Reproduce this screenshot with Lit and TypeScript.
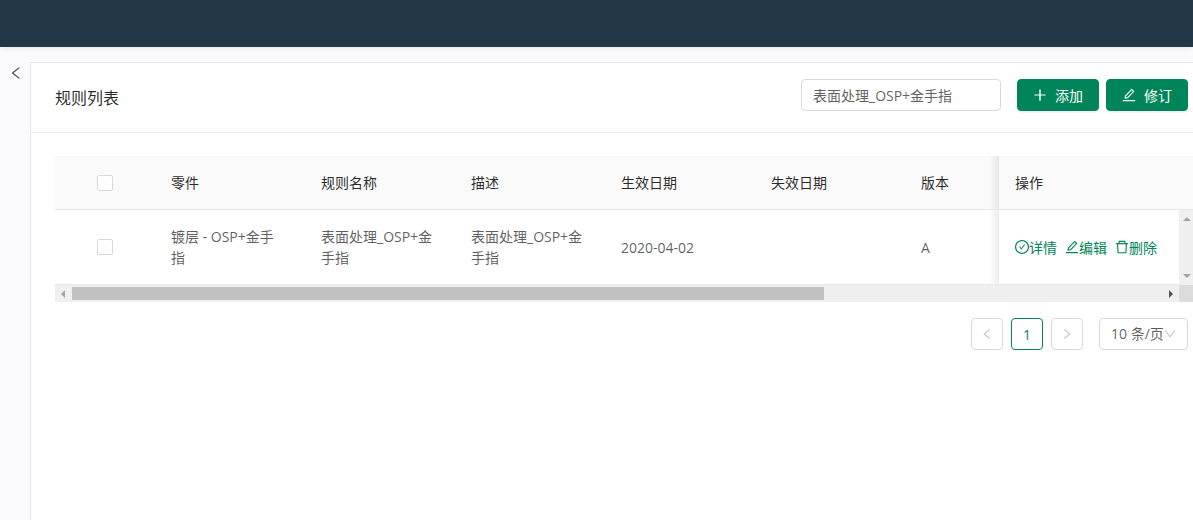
import { LitElement, html, css, svg } from "lit";
import { customElement, state } from "lit/decorators.js";

const ICONS: Record<string, string[]> = {
  plus: [
    "M474 152h76q8 0 8 8v704q0 8-8 8h-76q-8 0-8-8V160q0-8 8-8z",
    "M160 474h704q8 0 8 8v60q0 8-8 8H160q-8 0-8-8v-60q0-8 8-8z",
  ],
  edit: [
    "M257.7 752c2 0 4-.2 6-.5L431.9 722c2-.4 3.9-1.3 5.3-2.8l423.9-423.9a9.96 9.96 0 000-14.1L694.9 114.9c-1.9-1.9-4.4-2.9-7.1-2.9s-5.2 1-7.1 2.9L256.8 538.8c-1.5 1.5-2.4 3.3-2.8 5.3l-29.5 168.2a33.5 33.5 0 009.4 29.8c6.6 6.4 14.9 9.9 23.8 9.9zm67.4-174.4L687.8 215l73.3 73.3-362.7 362.6-88.9 15.7 15.6-89zM880 836H144c-17.7 0-32 14.3-32 32v36c0 4.4 3.6 8 8 8h784c4.4 0 8-3.6 8-8v-36c0-17.7-14.3-32-32-32z",
  ],
  check: [
    "M699 353h-46.9c-10.2 0-19.9 4.9-25.9 13.3L469 584.3l-71.2-98.8c-6-8.3-15.6-13.3-25.9-13.3H325c-6.5 0-10.3 7.4-6.5 12.7l124.6 172.8a31.8 31.8 0 0051.7 0l210.6-292c3.9-5.3.1-12.7-6.4-12.7z",
    "M512 64C264.6 64 64 264.6 64 512s200.6 448 448 448 448-200.6 448-448S759.4 64 512 64zm0 820c-205.4 0-372-166.6-372-372s166.6-372 372-372 372 166.6 372 372-166.6 372-372 372z",
  ],
  trash: [
    "M360 184h-8c4.4 0 8-3.6 8-8v8h304v-8c0 4.4 3.6 8 8 8h-8v72h72v-80c0-35.3-28.7-64-64-64H352c-35.3 0-64 28.7-64 64v80h72v-72zm504 72H160c-17.7 0-32 14.3-32 32v32c0 4.4 3.6 8 8 8h60.4l24.7 523c1.6 34.1 29.8 61 63.9 61h454c34.2 0 62.3-26.8 63.9-61l24.7-523H888c4.4 0 8-3.6 8-8v-32c0-17.7-14.3-32-32-32zM731.3 840H292.7l-24.2-512h487l-24.2 512z",
  ],
  left: [
    "M724 218.3V141c0-6.7-7.7-10.4-12.9-6.3L260.3 486.8a31.86 31.86 0 000 50.3l450.8 352.1c5.3 4.1 12.9.4 12.9-6.3v-77.3c0-4.9-2.3-9.6-6.1-12.6l-360-281 360-281.1c3.8-3 6.1-7.7 6.1-12.6z",
  ],
  right: [
    "M765.7 486.8L314.9 134.7A7.97 7.97 0 00302 141v77.3c0 4.9 2.3 9.6 6.1 12.6l360 281.1-360 281.1c-3.9 3-6.1 7.7-6.1 12.6V883c0 6.7 7.7 10.4 12.9 6.3l450.8-352.1a31.96 31.96 0 000-50.4z",
  ],
  down: [
    "M884 256h-75c-5.1 0-9.9 2.5-12.9 6.6L512 654.2 227.9 262.6c-3-4.1-7.8-6.6-12.9-6.6h-75c-6.5 0-10.3 7.4-6.5 12.7l352.6 486.1c12.8 17.6 39 17.6 51.7 0l352.6-486.1c3.9-5.3.1-12.7-6.4-12.7z",
  ],
};

const icon = (name: string, cls = "icon") => html`
  <svg class=${cls} viewBox="64 64 896 896" aria-hidden="true">
    ${ICONS[name].map((d) => svg`<path d=${d}></path>`)}
  </svg>`;

const arrow = (points: string, cls: string) => html`
  <svg class=${cls} viewBox="0 0 8 8" aria-hidden="true"><polygon points=${points}></polygon></svg>`;

interface Rule {
  part: string;
  name: string;
  desc: string;
  from: string;
  to: string;
  version: string;
}

@customElement("app-root")
export class AppRoot extends LitElement {
  @state() private keyword = "表面处理_OSP+金手指";

  private rules: Rule[] = [
    {
      part: "镀层 - OSP+金手指",
      name: "表面处理_OSP+金手指",
      desc: "表面处理_OSP+金手指",
      from: "2020-04-02",
      to: "",
      version: "A",
    },
  ];

  static styles = css`
    :host {
      display: flex;
      flex-direction: column;
      min-height: 100vh;
      background: #f9f9fe;
      color: rgba(0, 0, 0, 0.65);
      font: 14px/21px "Open Sans", "Noto Sans CJK SC", sans-serif;
    }
    * {
      box-sizing: border-box;
    }
    button,
    input,
    select {
      font: inherit;
      color: inherit;
      margin: 0;
    }
    button {
      cursor: pointer;
    }
    .icon {
      width: 14px;
      height: 14px;
      fill: currentColor;
      flex: none;
    }
    .topbar {
      height: 47px;
      background: #243746;
      box-shadow: 0 1px 6px rgba(0, 21, 41, 0.08);
    }
    .body {
      flex: 1;
      display: flex;
      padding-top: 15px;
    }
    .side {
      width: 30px;
      flex: none;
      padding-left: 2px;
      display: flex;
      justify-content: center;
      align-items: flex-start;
    }
    .collapse {
      display: flex;
      border: 0;
      background: none;
      padding: 4px 0;
    }
    .card {
      flex: 1;
      min-width: 0;
      background: #fff;
      border: solid #e8e8e8;
      border-width: 1px 0 0 1px;
    }
    .head {
      display: flex;
      align-items: center;
      height: 70px;
      padding: 0 5px 5px 24px;
      border-bottom: 1px solid #e8e8e8;
    }
    h1 {
      flex: 1;
      margin: 0;
      padding-top: 5px;
      font-size: 16px;
      line-height: 24px;
      font-weight: 400;
      color: rgba(0, 0, 0, 0.85);
    }
    .search {
      width: 200px;
      height: 32px;
      margin-right: 16px;
      padding: 0 11px;
      border: 1px solid #d9d9d9;
      border-radius: 4px;
      background: #fff;
      outline: none;
    }
    .actions {
      display: flex;
      gap: 7px;
    }
    .primary {
      display: flex;
      align-items: center;
      gap: 8px;
      height: 32px;
      padding: 0 15px;
      border: 1px solid #00855a;
      border-radius: 4px;
      background: #00855a;
      color: #fff;
      box-shadow: 0 2px 0 rgba(0, 0, 0, 0.04);
    }
    .content {
      padding: 23px 0 0 24px;
    }
    table {
      width: 100%;
      table-layout: fixed;
      border-collapse: separate;
      border-spacing: 0;
    }
    .c-check {
      width: 100px;
    }
    .c-data {
      width: 150px;
    }
    .c-ops {
      width: 180px;
    }
    .c-bar {
      width: 14px;
    }
    th,
    td {
      padding: 16px 20px 16px 16px;
      text-align: left;
      font-weight: 400;
      border-bottom: 1px solid #e8e8e8;
    }
    th {
      height: 54px;
      background: #fafafa;
      color: rgba(0, 0, 0, 0.85);
    }
    td {
      height: 75px;
    }
    .check {
      padding: 16px;
      text-align: center;
      line-height: 0;
    }
    .check input {
      appearance: none;
      width: 16px;
      height: 16px;
      border: 1px solid #d9d9d9;
      border-radius: 2px;
      background: #fff;
      vertical-align: middle;
    }
    .check input:checked {
      background: #00855a;
      border-color: #00855a;
    }
    .edge {
      background-image: linear-gradient(to left, rgba(0, 0, 0, 0.07), rgba(0, 0, 0, 0));
      background-repeat: no-repeat;
      background-position: right;
      background-size: 10px 100%;
    }
    td.ops {
      padding-right: 0;
    }
    .links {
      display: flex;
      gap: 8px;
    }
    .links a {
      display: flex;
      align-items: center;
      color: #00855a;
      text-decoration: none;
      white-space: nowrap;
    }
    td.vbar {
      padding: 0;
      background: #f0f0f0;
      border-bottom-color: #f0f0f0;
    }
    .track {
      display: flex;
      flex-direction: column;
      justify-content: space-between;
      align-items: flex-end;
      height: 74px;
      padding: 5px 2px 4px 0;
    }
    .arrow {
      width: 8px;
      height: 8px;
      flex: none;
      fill: #a3a3a3;
    }
    .arrow.on {
      fill: #505050;
    }
    .hbar {
      display: flex;
      height: 17px;
      background: #f0f0f0;
    }
    .rail {
      flex: 1;
      display: flex;
      align-items: center;
      gap: 5px;
      padding: 0 4px;
    }
    .lane {
      flex: 1;
      height: 13px;
    }
    .thumb {
      width: 69%;
      height: 13px;
      background: #c1c1c1;
    }
    .corner {
      width: 14px;
      background: #dcdcdc;
    }
    .pager {
      display: flex;
      justify-content: flex-end;
      gap: 8px;
      padding: 16px 5px 16px 0;
    }
    .page {
      display: flex;
      align-items: center;
      justify-content: center;
      width: 32px;
      height: 32px;
      padding: 0;
      border: 1px solid #d9d9d9;
      border-radius: 4px;
      background: #fff;
    }
    .page .icon,
    .size .icon {
      width: 12px;
      height: 12px;
    }
    .page:disabled {
      color: rgba(0, 0, 0, 0.25);
      cursor: default;
    }
    .page.current {
      border-color: #00855a;
      color: #00855a;
    }
    .size {
      display: grid;
      align-items: center;
      width: 89px;
      margin-left: 8px;
    }
    .size select,
    .size .icon {
      grid-area: 1 / 1;
    }
    .size select {
      appearance: none;
      width: 100%;
      height: 32px;
      padding: 0 11px 2px;
      border: 1px solid #d9d9d9;
      border-radius: 4px;
      background: #fff;
    }
    .size .icon {
      justify-self: end;
      margin-right: 12px;
      color: rgba(0, 0, 0, 0.25);
      pointer-events: none;
    }
  `;

  render() {
    return html`
      <header class="topbar"></header>
      <div class="body">
        <aside class="side">
          <button class="collapse" aria-label="收起">${icon("left")}</button>
        </aside>
        <main class="card">
          <div class="head">
            <h1>规则列表</h1>
            <input
              class="search"
              type="text"
              aria-label="规则名称"
              .value=${this.keyword}
              @input=${(e: Event) => (this.keyword = (e.target as HTMLInputElement).value)}
            />
            <div class="actions">
              <button class="primary">${icon("plus")}<span>添加</span></button>
              <button class="primary">${icon("edit")}<span>修订</span></button>
            </div>
          </div>
          <div class="content">
            <table>
              <colgroup>
                <col class="c-check" />
                <col class="c-data" /><col class="c-data" /><col class="c-data" />
                <col class="c-data" /><col class="c-data" />
                <col />
                <col class="c-ops" />
                <col class="c-bar" />
              </colgroup>
              <thead>
                <tr>
                  <th class="check"><input type="checkbox" aria-label="全选" /></th>
                  <th>零件</th>
                  <th>规则名称</th>
                  <th>描述</th>
                  <th>生效日期</th>
                  <th>失效日期</th>
                  <th class="edge">版本</th>
                  <th colspan="2">操作</th>
                </tr>
              </thead>
              <tbody>
                ${this.rules.map(
                  (r) => html`<tr>
                    <td class="check"><input type="checkbox" aria-label=${r.name} /></td>
                    <td>${r.part}</td>
                    <td>${r.name}</td>
                    <td>${r.desc}</td>
                    <td>${r.from}</td>
                    <td>${r.to}</td>
                    <td class="edge">${r.version}</td>
                    <td class="ops">
                      <div class="links">
                        <a href="#detail">${icon("check")}详情</a>
                        <a href="#edit">${icon("edit")}编辑</a>
                        <a href="#delete">${icon("trash")}删除</a>
                      </div>
                    </td>
                    <td class="vbar">
                      <div class="track">
                        ${arrow("0,6 4,2 8,6", "arrow")} ${arrow("0,2 4,6 8,2", "arrow")}
                      </div>
                    </td>
                  </tr>`
                )}
              </tbody>
            </table>
            <div class="hbar">
              <div class="rail">
                ${arrow("6,0 2,4 6,8", "arrow")}
                <div class="lane"><div class="thumb"></div></div>
                ${arrow("2,0 6,4 2,8", "arrow on")}
              </div>
              <div class="corner"></div>
            </div>
            <nav class="pager" aria-label="分页">
              <button class="page" disabled aria-label="上一页">${icon("left")}</button>
              <button class="page current" aria-current="page">1</button>
              <button class="page" disabled aria-label="下一页">${icon("right")}</button>
              <div class="size">
                <select aria-label="每页条数">
                  <option>10 条/页</option>
                  <option>20 条/页</option>
                  <option>50 条/页</option>
                </select>
                ${icon("down")}
              </div>
            </nav>
          </div>
        </main>
      </div>
    `;
  }
}
